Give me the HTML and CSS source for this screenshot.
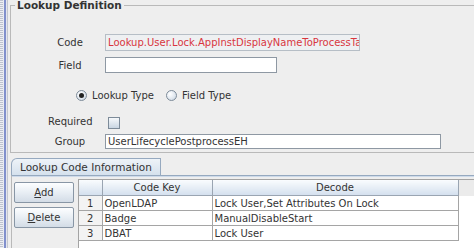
FILE: index.html
```html
<!DOCTYPE html>
<html>
<head>
<meta charset="utf-8">
<link rel="stylesheet" href="styles.css">
</head>
<body>
<div class="frame">
  <div class="edge"></div>
  <div class="main">
    <fieldset class="def">
      <legend class="def-title">Lookup Definition</legend>
      <div class="row r-code">
        <span class="lbl">Code</span>
        <div class="ro-field">Lookup.User.Lock.AppInstDisplayNameToProcessTa</div>
      </div>
      <div class="row r-field">
        <span class="lbl">Field</span>
        <div class="input w-field"></div>
      </div>
      <div class="row r-radio">
        <span class="radio on"></span><span class="rtext">Lookup Type</span>
        <span class="radio"></span><span class="rtext">Field Type</span>
      </div>
      <div class="row r-req">
        <span class="lbl">Required</span>
        <span class="check"></span>
      </div>
      <div class="row r-group">
        <span class="lbl">Group</span>
        <div class="input w-group">UserLifecyclePostprocessEH</div>
      </div>
    </fieldset>

    <div class="tabs">
      <div class="tab">Lookup Code Information</div>
    </div>
    <div class="tabpanel">
      <div class="btns">
        <button class="btn"><u>A</u>dd</button>
        <button class="btn"><u>D</u>elete</button>
      </div>
      <div class="scroll">
        <table class="grid">
          <colgroup>
            <col class="c-num"><col class="c-key"><col class="c-dec">
          </colgroup>
          <thead>
            <tr><th></th><th>Code Key</th><th>Decode</th></tr>
          </thead>
          <tbody>
            <tr><td class="num">1</td><td>OpenLDAP</td><td>Lock User,Set Attributes On Lock</td></tr>
            <tr><td class="num">2</td><td>Badge</td><td>ManualDisableStart</td></tr>
            <tr><td class="num">3</td><td>DBAT</td><td>Lock User</td></tr>
          </tbody>
        </table>
      </div>
    </div>
  </div>
</div>
</body>
</html>
```

FILE: styles.css
```css
html, body {
  margin: 0;
  padding: 0;
  background: #eeeeee;
}
body {
  font-family: "DejaVu Sans", "Liberation Sans", sans-serif;
  font-size: 10px;
  color: #333333;
}
.frame {
  display: flex;
  width: 474px;
  height: 248px;
  overflow: hidden;
}
.edge {
  flex: 0 0 9px;
  background:
    repeating-linear-gradient(to bottom, #bfc3cf 0 1px, #eceef3 1px 2px) 0 0 / 3px 100% no-repeat,
    linear-gradient(to right, #e9ebf1 0 4px, #8190cc 4px 6px, #e4e6ee 6px 7px, #c3c6cf 7px 8px, #eeeeee 8px);
}
.main {
  flex: 0 0 480px;
}

/* Lookup Definition group */
.def {
  margin: 0 0 0 1px;
  padding: 0 0 3px 0;
  border: 1px solid #b9b9b9;
  min-width: 0;
}
.def-title {
  font-size: 10.5px;
  font-weight: bold;
  line-height: 10px;
  color: #333333;
  margin-left: 4px;
  padding: 0 2px;
}
.row {
  display: flex;
  align-items: center;
}
.lbl {
  width: 44px;
  margin-left: 37px;
  margin-right: 13px;
  text-align: center;
  white-space: nowrap;
}
.r-code { margin-top: 24px; height: 17px; }
.r-field { margin-top: 6px; height: 16px; }
.r-radio { margin-top: 15px; height: 14px; padding-left: 65px; }
.r-req { margin-top: 12px; height: 14px; }
.r-group { margin-top: 6px; height: 15px; }

.ro-field {
  box-sizing: border-box;
  width: 255px;
  height: 17px;
  line-height: 15px;
  padding-left: 2px;
  background: #eef0f2;
  border: 1px solid #b6bec6;
  color: #d9363e;
  white-space: nowrap;
  overflow: hidden;
}
.input {
  box-sizing: border-box;
  height: 100%;
  line-height: 14px;
  padding-left: 2px;
  background: #ffffff;
  border: 1px solid #8e98a3;
  white-space: nowrap;
  overflow: hidden;
}
.w-field { width: 172px; }
.w-group { width: 336px; }

.radio {
  box-sizing: border-box;
  width: 11px;
  height: 11px;
  border-radius: 50%;
  border: 1px solid #7d8b99;
  background: radial-gradient(circle at 35% 35%, #ffffff 0, #e4eaf1 50%, #c4d0dd 100%);
  margin-right: 5px;
  position: relative;
}
.radio.on::after {
  content: "";
  position: absolute;
  left: 2px;
  top: 2px;
  width: 5px;
  height: 5px;
  border-radius: 50%;
  background: #222222;
}
.rtext { margin-right: 12px; }

.check {
  box-sizing: border-box;
  width: 12px;
  height: 12px;
  margin-left: 3px;
  margin-top: 4px;
  border: 1px solid #7d8b99;
  background: linear-gradient(#f6f8fb, #c9d5e2);
}

/* Tabs */
.tabs {
  display: flex;
  margin-top: 5px;
  padding-left: 2px;
}
.tab {
  box-sizing: border-box;
  width: 150px;
  height: 17px;
  padding-left: 8px;
  font-size: 10.5px;
  line-height: 16px;
  color: #333333;
  border: 1px solid #96a9bf;
  border-bottom: none;
  border-top-left-radius: 6px;
  background: linear-gradient(#eef3f8, #d5e1ed);
  white-space: nowrap;
}
.tabpanel {
  display: flex;
  align-items: flex-start;
  margin-left: 2px;
  height: 80px;
  border-top: 1px solid #96a9bf;
  border-left: 1px solid #b9b9b9;
  box-shadow: inset 0 1px 0 #cddaea;
}
.btns {
  display: flex;
  flex-direction: column;
  gap: 4px;
  margin: 6px 0 0 2px;
}
.btn {
  box-sizing: border-box;
  width: 60px;
  height: 21px;
  padding: 0;
  font-family: "DejaVu Sans", "Liberation Sans", sans-serif;
  font-size: 10px;
  color: #333333;
  border: 1px solid #8896a5;
  border-radius: 2px;
  background: linear-gradient(#fdfeff, #e8eef4 50%, #d3dce6);
}
.btn u { text-decoration-thickness: 1px; }

.scroll {
  flex: 1;
  margin: 3px 0 0 4px;
  height: 80px;
  border: 1px solid #a3a3a3;
  background: linear-gradient(#ebebeb 0 16px, #ffffff 16px);
}
.grid {
  border-collapse: collapse;
  table-layout: fixed;
  width: 379px;
}
.c-num { width: 23px; }
.c-key { width: 110px; }
.c-dec { width: 246px; }
.grid th, .grid td {
  padding: 0 0 0 2px;
  border-right: 1px solid #a5a5a5;
  border-bottom: 1px solid #a5a5a5;
  white-space: nowrap;
  overflow: hidden;
  font-weight: normal;
  text-align: left;
}
.grid th {
  height: 15px;
  padding: 0;
  text-align: center;
  background: linear-gradient(#fafcfe, #d4e0ee);
  border-color: #9aa5b2;
}
.grid td { height: 14px; background: #ffffff; }
.grid td.num {
  text-align: center;
  padding: 0;
  background: #f3f3f3;
}
```
